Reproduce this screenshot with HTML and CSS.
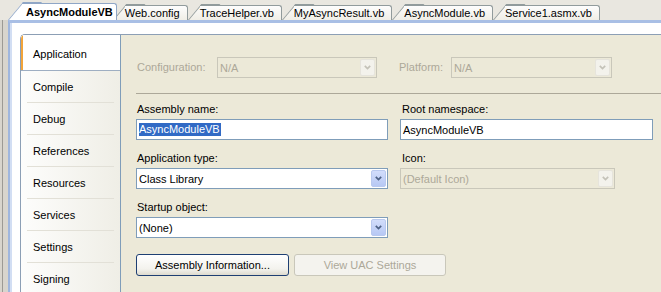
FILE: index.html
```html
<!DOCTYPE html>
<html>
<head>
<meta charset="utf-8">
<link rel="stylesheet" href="styles.css">
</head>
<body>
<div class="window">
  <div class="tabstrip">
    <div class="tab active"><span>AsyncModuleVB</span></div>
    <div class="tab"><span>Web.config</span></div>
    <div class="tab"><span>TraceHelper.vb</span></div>
    <div class="tab"><span>MyAsyncResult.vb</span></div>
    <div class="tab"><span>AsyncModule.vb</span></div>
    <div class="tab"><span>Service1.asmx.vb</span></div>
  </div>
  <div class="frame">
    <div class="panel">
      <nav class="nav">
        <div class="nav-item active"><span>Application</span></div>
        <div class="nav-item"><span>Compile</span></div>
        <div class="nav-item"><span>Debug</span></div>
        <div class="nav-item"><span>References</span></div>
        <div class="nav-item"><span>Resources</span></div>
        <div class="nav-item"><span>Services</span></div>
        <div class="nav-item"><span>Settings</span></div>
        <div class="nav-item"><span>Signing</span></div>
      </nav>
      <div class="content">
        <div class="config-row">
          <span class="lbl disabled lbl-config">Configuration:</span>
          <div class="select disabled sel-config"><span class="val">N/A</span><span class="arrow"><svg width="7" height="5" viewBox="0 0 7 5"><polyline points="0.8,0.8 3.5,3.6 6.2,0.8" fill="none" stroke="#c4c2b8" stroke-width="1.7"/></svg></span></div>
          <span class="lbl disabled lbl-platform">Platform:</span>
          <div class="select disabled sel-platform"><span class="val">N/A</span><span class="arrow"><svg width="7" height="5" viewBox="0 0 7 5"><polyline points="0.8,0.8 3.5,3.6 6.2,0.8" fill="none" stroke="#c4c2b8" stroke-width="1.7"/></svg></span></div>
        </div>
        <div class="sep"></div>
        <div class="fields">
          <div class="field">
            <div class="lbl">Assembly name:</div>
            <div class="input"><span class="selected">AsyncModuleVB</span></div>
          </div>
          <div class="field">
            <div class="lbl">Root namespace:</div>
            <div class="input">AsyncModuleVB</div>
          </div>
          <div class="field">
            <div class="lbl">Application type:</div>
            <div class="select"><span class="val">Class Library</span><span class="arrow"><svg width="7" height="5" viewBox="0 0 7 5"><polyline points="0.8,0.8 3.5,3.6 6.2,0.8" fill="none" stroke="#4d6185" stroke-width="1.7"/></svg></span></div>
          </div>
          <div class="field">
            <div class="lbl">Icon:</div>
            <div class="select disabled sel-icon"><span class="val">(Default Icon)</span><span class="arrow"><svg width="7" height="5" viewBox="0 0 7 5"><polyline points="0.8,0.8 3.5,3.6 6.2,0.8" fill="none" stroke="#c4c2b8" stroke-width="1.7"/></svg></span></div>
          </div>
          <div class="field">
            <div class="lbl">Startup object:</div>
            <div class="select"><span class="val">(None)</span><span class="arrow"><svg width="7" height="5" viewBox="0 0 7 5"><polyline points="0.8,0.8 3.5,3.6 6.2,0.8" fill="none" stroke="#4d6185" stroke-width="1.7"/></svg></span></div>
          </div>
        </div>
        <div class="buttons">
          <div class="btn">Assembly Information...</div>
          <div class="btn disabled">View UAC Settings</div>
        </div>
      </div>
    </div>
  </div>
</div>
</body>
</html>
```
FILE: styles.css
```css
* { box-sizing: border-box; }
html, body { margin: 0; padding: 0; }
body {
  font-family: "Liberation Sans", Arial, sans-serif;
  font-size: 11px;
  color: #000;
  background: #d8d5cd;
}
.window {
  width: 661px;
  height: 292px;
  overflow: hidden;
  background: linear-gradient(to right, #d8d5cd 0, #d8d5cd 2px, #9c9a94 2px, #9c9a94 3px, #d8d5cd 3px);
}

/* ---------- tabs ---------- */
.tabstrip {
  height: 20px;
  display: flex;
  align-items: flex-end;
  padding-left: 8px;
  background: #e9e7e0;
}
.tab {
  position: relative;
  z-index: 1;
  height: 15px;
  display: flex;
  align-items: center;
  padding: 1px 8px 0 12px;
  white-space: nowrap;
}
.tab::before {
  content: "";
  position: absolute;
  left: 0;
  bottom: 0;
  width: 18px;
  height: 100%;
  background: linear-gradient(#fdfdfd, #f0eee6);
  border-left: 1px solid #919b9c;
  border-top: 1px solid #919b9c;
  transform: skewX(-40deg);
  transform-origin: bottom left;
  z-index: -1;
}
.tab::after {
  content: "";
  position: absolute;
  left: 12px;
  right: 0;
  top: 0;
  bottom: 0;
  background: linear-gradient(#fdfdfd, #f0eee6);
  border-top: 1px solid #919b9c;
  border-right: 1px solid #919b9c;
  border-top-right-radius: 3px;
  z-index: -1;
}
.tab.active {
  z-index: 3;
  height: 17px;
  font-weight: bold;
  padding: 1px 4px 0 18px;
  margin-right: -4px;
}
.tab.active::before,
.tab.active::after {
  background: #fff;
  border-color: #8fa6c6;
}
.tab.active::after { left: 14px; }

/* ---------- frame ---------- */
.frame {
  margin-left: 8px;
  height: 272px;
  background: #fff;
  border-left: 2px solid #9fb6dd;
  border-top: 3px solid #a9bfe5;
  box-shadow: inset 2px 0 0 #d2def3;
  padding: 11px 0 0 10px;
}
.panel {
  display: flex;
  height: 100%;
  border-top: 1px solid #8c9fb5;
  border-left: 1px solid #8c9fb5;
  border-top-left-radius: 5px;
  overflow: hidden;
}

/* ---------- nav ---------- */
.nav {
  width: 100px;
  flex: none;
  border-right: 1px solid #7f9db9;
  background: linear-gradient(to right, #fdfdfc, #efeee6);
}
.nav-item {
  padding: 0 6px;
}
.nav-item span {
  display: flex;
  align-items: center;
  height: 32px;
  padding-left: 6px;
  border-bottom: 1px solid #e2e0d7;
}
.nav-item.active {
  background: #fff;
  padding: 3px 0 0 12px;
  height: 36px;
  border-bottom: 1px solid #9eaec2;
  box-shadow: inset 2px 0 0 #f2a43a;
}
.nav-item.active span {
  height: 32px;
  padding-left: 0;
  border-bottom: none;
}

/* ---------- content ---------- */
.content {
  flex: 1;
  background: #ece9d8;
  padding: 22px 0 0 15px;
}
.config-row {
  display: flex;
  align-items: center;
  height: 21px;
}
.lbl {
  line-height: 13px;
  padding-left: 1px;
  white-space: nowrap;
}
.lbl.disabled { color: #aca899; }
.lbl-config { width: 81px; }
.sel-config { width: 160px; }
.lbl-platform { width: 53px; margin-left: 21px; }
.sel-platform { width: 161px; }

.sep {
  height: 1px;
  background: #aca899;
  margin: 15px 0 9px;
}

.fields {
  display: grid;
  grid-template-columns: 252px 253px;
  column-gap: 12px;
  row-gap: 12px;
}
.field .lbl { margin-bottom: 3px; }
.fields .field:nth-child(even) .lbl { padding-left: 2px; }

.input, .select {
  height: 21px;
  border: 1px solid #7f9db9;
  background: #fff;
  display: flex;
  align-items: center;
  white-space: nowrap;
}
.input { padding-left: 2px; }
.selected {
  background: #316ac5;
  color: #fff;
  line-height: 13px;
  padding: 0 1px 0 0;
}
.select { padding: 0 1px 0 2px; }
.select .val { flex: 1; }
.arrow {
  width: 15px;
  height: 17px;
  flex: none;
  display: flex;
  align-items: center;
  justify-content: center;
  border: 1px solid #b9c9ef;
  border-radius: 2px;
  background: linear-gradient(#d2ddfb, #b7c8f4);
}
.select.disabled {
  border-color: #c9c7ba;
  background: #ece9d8;
  color: #aca899;
}
.select.disabled .arrow {
  border-color: #e6e4dc;
  background: #f3f2ec;
}
.sel-icon { width: 215px; }

.buttons {
  display: flex;
  gap: 5px;
  margin-top: 16px;
}
.btn {
  height: 22px;
  display: flex;
  align-items: center;
  justify-content: center;
  border: 1px solid #1e3f73;
  border-radius: 3px;
  background: linear-gradient(#ffffff, #f3f2ed 70%, #dedbcf);
  width: 153px;
  white-space: nowrap;
}
.btn.disabled {
  width: 152px;
  border-color: #c9c7ba;
  background: #f4f3ee;
  color: #aca899;
}
```
